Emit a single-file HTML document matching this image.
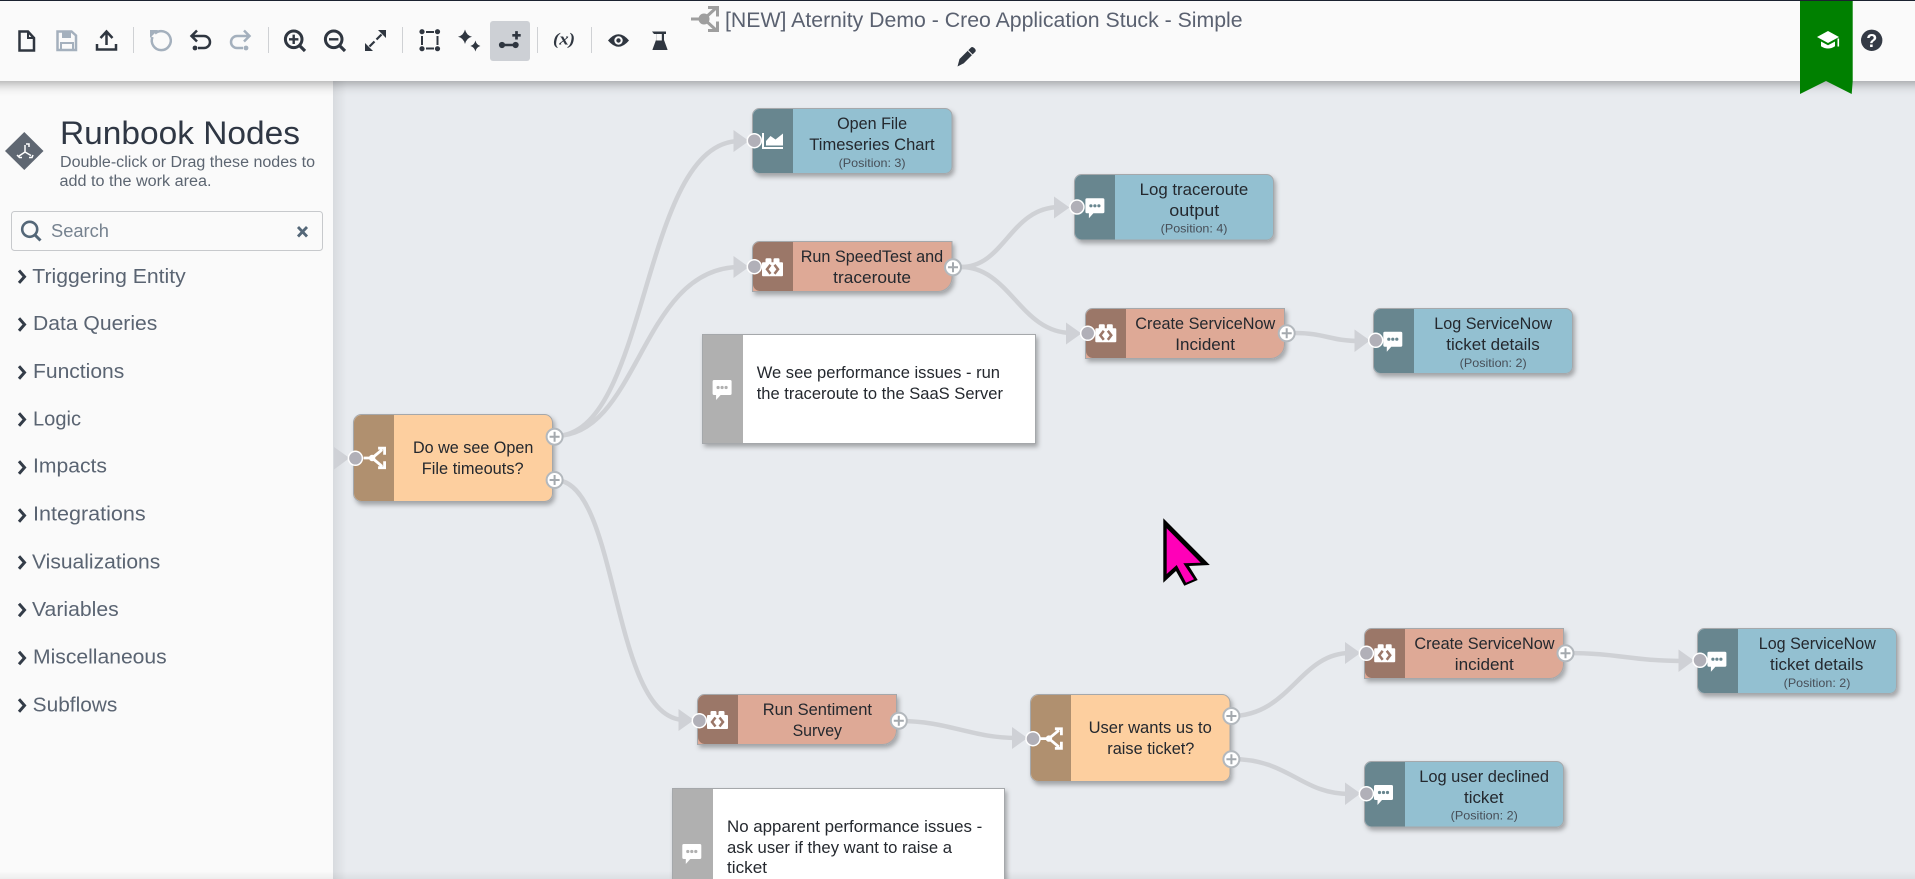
<!DOCTYPE html>
<html lang="en">
<head>
<meta charset="utf-8">
<title>Runbook Editor</title>
<style>
html,body{margin:0;padding:0;width:1915px;height:879px;overflow:hidden;background:#e8ebef}
svg{display:block}
text{font-family:"Liberation Sans",sans-serif}
.n{font-size:16.5px;fill:#24282e}
.p{font-size:12px;fill:#474e57}
.m{font-size:20px;fill:#5a6472}
.e{fill:none;stroke:#cfd1d5;stroke-width:4.5}
.a{fill:#cfd1d6}
.i{fill:#b1b0b8;stroke:#fff;stroke-width:1.5}
.o{fill:#fff;stroke:#b3b8bd;stroke-width:2}
.ph{stroke:#a4a9ae;stroke-width:2;fill:none}
.d{fill:none;stroke:#2f3640;stroke-width:2.5}
.l{fill:none;stroke:#a4b0bd;stroke-width:2.5}
.s{stroke:#cfd1d4;stroke-width:1}
.c{fill:none;stroke:#333c48;stroke-width:3}
</style>
</head>
<body>
<svg xmlns="http://www.w3.org/2000/svg" width="1915" height="879" viewBox="0 0 1915 879">
<defs>
<filter id="sh" x="-15%" y="-25%" width="130%" height="160%"><feDropShadow dx="2" dy="3" stdDeviation="2.500" flood-color="#000" flood-opacity=".3"/></filter>
<filter id="ts" x="-2%" y="-30%" width="104%" height="170%"><feDropShadow dx="0" dy="2" stdDeviation="6" flood-color="#000" flood-opacity=".38"/></filter>
<linearGradient id="sg" x1="0" x2="1" y1="0" y2="0"><stop offset="0" stop-color="#000" stop-opacity=".07"/><stop offset="1" stop-color="#000" stop-opacity="0"/></linearGradient>
<linearGradient id="bg" x1="0" x2="0" y1="0" y2="1"><stop offset="0" stop-color="#000" stop-opacity="0"/><stop offset="1" stop-color="#000" stop-opacity=".05"/></linearGradient>
<g id="bubble"><path d="M1.500 0h16a1.500 1.500 0 0 1 1.500 1.500v12a1.500 1.500 0 0 1-1.500 1.500H8L3.500 20V15h-2A1.500 1.500 0 0 1 0 13.500v-12A1.500 1.500 0 0 1 1.500 0z" fill="#fff"/><circle cx="5.500" cy="7.500" r="1.600" fill="currentColor"/><circle cx="9.500" cy="7.500" r="1.600" fill="currentColor"/><circle cx="13.500" cy="7.500" r="1.600" fill="currentColor"/></g>
<g id="script"><path d="M1 4h2.500V1.200q0-1.200 1.200-1.200h3.600q1.200 0 1.200 1.200V4h2V1.200q0-1.200 1.200-1.200h3.600q1.200 0 1.200 1.200V4H20q1 0 1 1v12q0 1-1 1H1q-1 0-1-1V5q0-1 1-1z" fill="#fff"/><path d="M8.500 6.500 5 11l3.500 4.500M12.500 6.500 16 11l-3.500 4.500" fill="none" stroke="currentColor" stroke-width="2.500"/></g>
<g id="dec" fill="none" stroke="#fff" stroke-width="2.800"><path d="M0 11.300h9M8.500 11.300 18.500 3M8.500 11.300 18.500 19.600M14.500 1.500h6.500v6.500M14.500 21h6.500v-6.500"/><circle cx="8.500" cy="11.300" r="3.200" fill="#fff" stroke="none"/></g>
<path id="ch" d="M0-6.200 5.500 0 0 6.200" class="c"/>
</defs>

<!-- canvas -->
<rect width="1915" height="879" fill="#e8ebef"/>
<rect x="333" y="0" width="14" height="879" fill="url(#sg)"/>

<!-- sidebar -->
<rect x="0" y="0" width="333" height="879" fill="#fafafa"/>
<rect x="0" y="871" width="1915" height="8" fill="url(#bg)"/>
<polygon points="5,151 24.300,132 43.500,151 24.300,170" fill="#5f6772"/>
<path d="M25 152V145M25 152l-6 4M25 152l6 3.500M26 144h3v3M17 155l2.500 2.500h2.500M33 155l-1 2.500h-3" fill="none" stroke="#fff" stroke-width="1.500"/>
<text x="60" y="144" font-size="32" fill="#2f3744" textLength="240" lengthAdjust="spacingAndGlyphs">Runbook Nodes</text>
<text x="60" y="167" font-size="15.500" fill="#5c6571" textLength="255" lengthAdjust="spacingAndGlyphs">Double-click or Drag these nodes to</text>
<text x="59.500" y="186" font-size="15.500" fill="#5c6571" textLength="152" lengthAdjust="spacingAndGlyphs">add to the work area.</text>
<rect x="11.500" y="211.500" width="311" height="39" rx="3" fill="#fafafa" stroke="#c7c9cc"/>
<circle cx="29.700" cy="229.300" r="7.500" fill="none" stroke="#546778" stroke-width="2.600"/>
<path d="M35 235l5.500 5.500" stroke="#546778" stroke-width="3" fill="none"/>
<text x="51" y="237" font-size="18" fill="#76828f" textLength="58" lengthAdjust="spacingAndGlyphs">Search</text>
<path d="M298 227l9 9.500M307 227l-9 9.500" stroke="#546778" stroke-width="2.800" fill="none"/>

<use href="#ch" x="19" y="276.700"/><text class="m" x="32.300" y="283" textLength="153.400" lengthAdjust="spacingAndGlyphs">Triggering Entity</text>
<use href="#ch" x="19" y="324.500"/><text class="m" x="33" y="330" textLength="124.300" lengthAdjust="spacingAndGlyphs">Data Queries</text>
<use href="#ch" x="19" y="372.500"/><text class="m" x="33" y="378" textLength="91.300" lengthAdjust="spacingAndGlyphs">Functions</text>
<use href="#ch" x="19" y="419.500"/><text class="m" x="33" y="425.700" textLength="48" lengthAdjust="spacingAndGlyphs">Logic</text>
<use href="#ch" x="19" y="467.500"/><text class="m" x="33" y="472.700" textLength="74" lengthAdjust="spacingAndGlyphs">Impacts</text>
<use href="#ch" x="19" y="515.500"/><text class="m" x="33" y="520.700" textLength="112.700" lengthAdjust="spacingAndGlyphs">Integrations</text>
<use href="#ch" x="19" y="562.500"/><text class="m" x="32" y="568.500" textLength="128.300" lengthAdjust="spacingAndGlyphs">Visualizations</text>
<use href="#ch" x="19" y="610"/><text class="m" x="32" y="616" textLength="86.700" lengthAdjust="spacingAndGlyphs">Variables</text>
<use href="#ch" x="19" y="658"/><text class="m" x="33" y="663.500" textLength="133.700" lengthAdjust="spacingAndGlyphs">Miscellaneous</text>
<use href="#ch" x="19" y="705.500"/><text class="m" x="32.700" y="711.700" textLength="84.600" lengthAdjust="spacingAndGlyphs">Subflows</text>

<!-- edges -->
<path class="e" d="M555 436C650 436 640 141 740 141"/>
<path class="e" d="M555 436C640 436 640 267 740 267"/>
<path class="e" d="M555 480C620 480 610 720 685 720"/>
<path class="e" d="M961 267C1005 267 1010 207 1060 207"/>
<path class="e" d="M961 267C1010 267 1020 333 1072 333"/>
<path class="e" d="M1295 333C1325 333 1330 341 1360 341"/>
<path class="e" d="M899 721C950 721 970 738 1018 738"/>
<path class="e" d="M1231 716C1290 716 1300 653 1350 653"/>
<path class="e" d="M1231 759C1290 759 1300 794 1350 794"/>
<path class="e" d="M1566 653C1620 653 1630 661 1684 661"/>

<!-- nodes -->
<g stroke="#a5a8ab">
<rect x="752.500" y="108.500" width="199.500" height="65" rx="7" fill="#93c0d1" filter="url(#sh)"/>
<rect x="1074.500" y="174.500" width="199" height="65.500" rx="7" fill="#93c0d1" filter="url(#sh)"/>
<rect x="1373.500" y="308.500" width="199" height="65" rx="7" fill="#93c0d1" filter="url(#sh)"/>
<rect x="1697.500" y="628.500" width="199" height="65" rx="7" fill="#93c0d1" filter="url(#sh)"/>
<rect x="1364.500" y="761.500" width="199" height="65.500" rx="7" fill="#93c0d1" filter="url(#sh)"/>
<path d="M759.500 241.500H952V277.500a14 14 0 0 1-14 14H752.500V248.500a7 7 0 0 1 7-7z" fill="#dea996" filter="url(#sh)"/>
<path d="M1092.500 308.500H1284.500V344.500a14 14 0 0 1-14 14H1085.500V315.500a7 7 0 0 1 7-7z" fill="#dea996" filter="url(#sh)"/>
<path d="M704.500 694.500H896.500V730.500a14 14 0 0 1-14 14H697.500V701.500a7 7 0 0 1 7-7z" fill="#dea996" filter="url(#sh)"/>
<path d="M1371.500 628.500H1563.500V664.500a14 14 0 0 1-14 14H1364.500V635.500a7 7 0 0 1 7-7z" fill="#dea996" filter="url(#sh)"/>
<rect x="353.500" y="414.500" width="199" height="87" rx="8" fill="#fdcf9f" filter="url(#sh)"/>
<rect x="1030.500" y="694.500" width="199.500" height="87" rx="8" fill="#fdcf9f" filter="url(#sh)"/>
<rect x="702.500" y="334.500" width="333" height="109" fill="#fff" filter="url(#sh)"/>
<rect x="672.500" y="788.500" width="332" height="110" fill="#fff" filter="url(#sh)"/>
</g>

<!-- strips -->
<g fill="#68868f">
<path d="M793 109H759.500a7 7 0 0 0-6.500 7V166a7 7 0 0 0 6.500 7H793z"/>
<path d="M1115 175H1081.500a7 7 0 0 0-6.500 7V232.500a7 7 0 0 0 6.500 7H1115z"/>
<path d="M1414 309H1380.500a7 7 0 0 0-6.500 7V366a7 7 0 0 0 6.500 7H1414z"/>
<path d="M1738 629H1704.500a7 7 0 0 0-6.500 7V686a7 7 0 0 0 6.500 7H1738z"/>
<path d="M1405 762H1371.500a7 7 0 0 0-6.500 7V819.500a7 7 0 0 0 6.500 7H1405z"/>
</g>
<g fill="#9b7768">
<path d="M793 242H759.500a7 7 0 0 0-6.500 7V284a7 7 0 0 0 6.500 7H793z"/>
<path d="M1126 309H1092.500a7 7 0 0 0-6.500 7V351a7 7 0 0 0 6.500 7H1126z"/>
<path d="M738 695H704.500a7 7 0 0 0-6.500 7V737a7 7 0 0 0 6.500 7H738z"/>
<path d="M1405 629H1371.500a7 7 0 0 0-6.500 7V671a7 7 0 0 0 6.500 7H1405z"/>
</g>
<g fill="#b0906f">
<path d="M394 415H361.500a8 8 0 0 0-7.500 8V493a8 8 0 0 0 7.500 8H394z"/>
<path d="M1071 695H1038.500a8 8 0 0 0-7.500 8V773a8 8 0 0 0 7.500 8H1071z"/>
</g>
<rect x="703" y="335" width="40" height="108" fill="#b0b0b0"/>
<rect x="673" y="789" width="40" height="90" fill="#b0b0b0"/>

<!-- node icons -->
<path d="M762 133h2v14h19v2h-21zM766 145.500v-4.500l4.500-5 5 3.500 7.500-6v12z" fill="#fff"/>
<use href="#bubble" x="1085.400" y="198.300" color="#68868f"/>
<use href="#bubble" x="1383.300" y="331.700" color="#68868f"/>
<use href="#bubble" x="1707.400" y="651.700" color="#68868f"/>
<use href="#bubble" x="1374" y="785" color="#68868f"/>
<use href="#bubble" x="712.600" y="380" color="#b0b0b0"/>
<use href="#bubble" x="682.300" y="844" color="#b0b0b0"/>
<use href="#script" x="762" y="258.300" color="#9b7768"/>
<use href="#script" x="1095.300" y="324.300" color="#9b7768"/>
<use href="#script" x="707" y="711" color="#9b7768"/>
<use href="#script" x="1374.200" y="644.300" color="#9b7768"/>
<use href="#dec" x="363.600" y="446.700"/>
<use href="#dec" x="1040.400" y="727.300"/>

<!-- arrows -->
<g class="a">
<polygon points="733.500,130 749,141 733.500,152"/>
<polygon points="733.500,256 749,267 733.500,278"/>
<polygon points="1054,196.500 1069.500,207.500 1054,218.500"/>
<polygon points="1066,322.500 1081.500,333.500 1066,344.500"/>
<polygon points="1354.500,329.500 1370,340.500 1354.500,352"/>
<polygon points="334,447 349.500,458 334,469.500"/>
<polygon points="678.500,709 694,720 678.500,731"/>
<polygon points="1012,727 1027.500,738 1012,749"/>
<polygon points="1345,642 1360.500,653 1345,664"/>
<polygon points="1345,782.500 1360.500,793.500 1345,805"/>
<polygon points="1678.500,649.500 1694,660.500 1678.500,672"/>
</g>

<!-- input ports -->
<circle class="i" cx="754.300" cy="140.700" r="7"/>
<circle class="i" cx="754.300" cy="266.700" r="7"/>
<circle class="i" cx="1077" cy="207" r="7"/>
<circle class="i" cx="1087.700" cy="333.300" r="7"/>
<circle class="i" cx="1375.700" cy="340.300" r="7"/>
<circle class="i" cx="355.400" cy="458.300" r="7"/>
<circle class="i" cx="699.300" cy="720.700" r="7"/>
<circle class="i" cx="1033" cy="738.700" r="7"/>
<circle class="i" cx="1366.400" cy="653.300" r="7"/>
<circle class="i" cx="1366.400" cy="793.700" r="7"/>
<circle class="i" cx="1700" cy="660.300" r="7"/>

<!-- output ports -->
<circle class="o" cx="953" cy="267.300" r="8"/><path class="ph" d="M948 267.300h10M953 262.300v10"/>
<circle class="o" cx="1286.700" cy="333.300" r="8"/><path class="ph" d="M1281.700 333.300h10M1286.700 328.300v10"/>
<circle class="o" cx="554.600" cy="436.700" r="8"/><path class="ph" d="M549.600 436.700h10M554.600 431.700v10"/>
<circle class="o" cx="554.600" cy="480" r="8"/><path class="ph" d="M549.600 480h10M554.600 475v10"/>
<circle class="o" cx="898.800" cy="720.700" r="8"/><path class="ph" d="M893.800 720.700h10M898.800 715.700v10"/>
<circle class="o" cx="1231.400" cy="716" r="8"/><path class="ph" d="M1226.400 716h10M1231.400 711v10"/>
<circle class="o" cx="1231.400" cy="759.300" r="8"/><path class="ph" d="M1226.400 759.300h10M1231.400 754.300v10"/>
<circle class="o" cx="1565.500" cy="653.300" r="8"/><path class="ph" d="M1560.500 653.300h10M1565.500 648.300v10"/>

<!-- node text -->
<text class="n" x="837.100" y="129" textLength="70" lengthAdjust="spacingAndGlyphs">Open File</text>
<text class="n" x="809.300" y="150" textLength="125.300" lengthAdjust="spacingAndGlyphs">Timeseries Chart</text>
<text class="p" x="838.600" y="167" textLength="67" lengthAdjust="spacingAndGlyphs">(Position: 3)</text>
<text class="n" x="800.700" y="262" textLength="142.500" lengthAdjust="spacingAndGlyphs">Run SpeedTest and</text>
<text class="n" x="833.200" y="283" textLength="77.800" lengthAdjust="spacingAndGlyphs">traceroute</text>
<text class="n" x="1139.600" y="195" textLength="108.600" lengthAdjust="spacingAndGlyphs">Log traceroute</text>
<text class="n" x="1169.300" y="216" textLength="50" lengthAdjust="spacingAndGlyphs">output</text>
<text class="p" x="1160.700" y="232.700" textLength="66.800" lengthAdjust="spacingAndGlyphs">(Position: 4)</text>
<text class="n" x="1135.300" y="329" textLength="140" lengthAdjust="spacingAndGlyphs">Create ServiceNow</text>
<text class="n" x="1175.300" y="350" textLength="59.700" lengthAdjust="spacingAndGlyphs">Incident</text>
<text class="n" x="1434.300" y="329" textLength="117.700" lengthAdjust="spacingAndGlyphs">Log ServiceNow</text>
<text class="n" x="1446.300" y="350" textLength="93.400" lengthAdjust="spacingAndGlyphs">ticket details</text>
<text class="p" x="1459.700" y="367" textLength="67" lengthAdjust="spacingAndGlyphs">(Position: 2)</text>
<text class="n" x="413" y="453" textLength="120.300" lengthAdjust="spacingAndGlyphs">Do we see Open</text>
<text class="n" x="421.800" y="474" textLength="101.800" lengthAdjust="spacingAndGlyphs">File timeouts?</text>
<text class="n" x="756.700" y="378" textLength="243.300" lengthAdjust="spacingAndGlyphs">We see performance issues - run</text>
<text class="n" x="756.700" y="399" textLength="246.300" lengthAdjust="spacingAndGlyphs">the traceroute to the SaaS Server</text>
<text class="n" x="762.700" y="715" textLength="109.300" lengthAdjust="spacingAndGlyphs">Run Sentiment</text>
<text class="n" x="792.600" y="736" textLength="49.400" lengthAdjust="spacingAndGlyphs">Survey</text>
<text class="n" x="1088.600" y="733" textLength="123.200" lengthAdjust="spacingAndGlyphs">User wants us to</text>
<text class="n" x="1107.300" y="754" textLength="87.100" lengthAdjust="spacingAndGlyphs">raise ticket?</text>
<text class="n" x="727" y="832" textLength="255.300" lengthAdjust="spacingAndGlyphs">No apparent performance issues -</text>
<text class="n" x="727" y="853" textLength="225" lengthAdjust="spacingAndGlyphs">ask user if they want to raise a</text>
<text class="n" x="727" y="873" textLength="40" lengthAdjust="spacingAndGlyphs">ticket</text>
<text class="n" x="1414.400" y="649" textLength="140.100" lengthAdjust="spacingAndGlyphs">Create ServiceNow</text>
<text class="n" x="1454.800" y="670" textLength="59" lengthAdjust="spacingAndGlyphs">incident</text>
<text class="n" x="1758.800" y="649" textLength="117" lengthAdjust="spacingAndGlyphs">Log ServiceNow</text>
<text class="n" x="1770" y="670" textLength="93.300" lengthAdjust="spacingAndGlyphs">ticket details</text>
<text class="p" x="1783.700" y="687" textLength="66.700" lengthAdjust="spacingAndGlyphs">(Position: 2)</text>
<text class="n" x="1419.200" y="782" textLength="129.800" lengthAdjust="spacingAndGlyphs">Log user declined</text>
<text class="n" x="1464" y="803" textLength="39.500" lengthAdjust="spacingAndGlyphs">ticket</text>
<text class="p" x="1450.700" y="819.700" textLength="67.100" lengthAdjust="spacingAndGlyphs">(Position: 2)</text>

<!-- cursor -->
<polygon points="1163.300,518.300 1209.800,565 1189,566 1197.700,580 1184.300,585.700 1176,571 1163.300,582.700" fill="#000"/>
<polygon points="1166.700,528.300 1200.700,562.700 1183.300,563.300 1194,579.300 1186,582.700 1176.700,565 1166.700,574" fill="#ff00b8"/>

<!-- toolbar -->
<rect x="-30" y="0" width="1975" height="81" fill="#fafafa" filter="url(#ts)"/>
<rect x="0" y="0" width="1915" height="1" fill="#1b2230"/>
<g class="s"><path d="M133.500 27v26M268.500 27v26M402.500 27v26M537.500 27v26M591.500 27v26"/></g>

<path class="d" d="M19.500 31.500h8.500l6 6.500v12.500h-14.500z"/><path d="M27 31h2v6h6v2h-8z" fill="#2f3640"/>
<path class="l" d="M57.500 31.500h14l4.500 4v14.500h-18.500z"/><rect x="62" y="31" width="9" height="7" fill="#a4b0bd"/><rect x="61" y="43" width="12" height="7" fill="none" stroke="#a4b0bd" stroke-width="2"/>
<path class="d" d="M106.500 45V33M100.500 38l6-6.500 6 6.500M97 44v5.500h19V44"/>

<path class="l" d="M155 33.500A9.500 9.500 0 1 1 152.500 37"/><polygon points="150,30 158,30 150,38" fill="#a4b0bd"/>
<path class="d" d="M192 36h12a6 6 0 0 1 0 12h-6M197 30.500l-5.500 5.500 5.500 5.500"/><circle cx="195" cy="48" r="2.400" fill="#2f3640"/>
<path class="l" d="M249 36h-12a6 6 0 0 0 0 12h6M244 30.500l5.500 5.500-5.500 5.500"/><circle cx="246" cy="48" r="2.400" fill="#a4b0bd"/>

<circle cx="293.700" cy="39.300" r="8.300" fill="none" stroke="#2f3640" stroke-width="3"/><path d="M300 46l5 5" stroke="#2f3640" stroke-width="3.200"/><path d="M289 39.300h9.400M293.700 34.600v9.400" stroke="#2f3640" stroke-width="2.400"/>
<circle cx="333.700" cy="39.300" r="8.300" fill="none" stroke="#2f3640" stroke-width="3"/><path d="M340 46l5 5" stroke="#2f3640" stroke-width="3.200"/><path d="M329 39.300h9.400" stroke="#2f3640" stroke-width="2.400"/>
<path d="M378 30h8v8zM365 43l8 8h-8z" fill="#2f3640"/><path d="M381.500 34.500l-5 5M369.500 46.500l5-5" fill="none" stroke="#2f3640" stroke-width="2.200"/>

<g fill="#2f3640"><circle cx="422" cy="31.700" r="2.600"/><circle cx="437.500" cy="31.700" r="2.600"/><circle cx="422" cy="48.700" r="2.600"/><circle cx="437.500" cy="48.700" r="2.600"/></g>
<path d="M426 32h8M426 48.500h8M422 36v9M437.500 36v9" fill="none" stroke="#2f3640" stroke-width="2"/>
<path d="M465 29.500q1.500 6 7 7.200q-5.500 1.200-7 7.300q-1.500-6.100-7-7.300q5.500-1.200 7-7.200zM475.400 40.500q1 4.300 5 5.500q-4 1.200-5 5.500q-1-4.300-5-5.500q4-1.200 5-5.500z" fill="#2f3640"/>

<rect x="490" y="21" width="40" height="40" rx="3" fill="#cdd0d5"/>
<circle cx="502" cy="45" r="3.100" fill="#2f3640"/><circle cx="515.600" cy="45" r="3.100" fill="#2f3640"/><path d="M502 45h13.600" stroke="#2f3640" stroke-width="2.500"/><path d="M512.300 35.300h8.400M516.500 31.100v8.400" stroke="#2f3640" stroke-width="2.700"/>

<text x="553" y="44.500" font-size="17" font-style="italic" font-weight="bold" fill="#2f3640" style="font-family:'Liberation Serif',serif" textLength="22" lengthAdjust="spacingAndGlyphs">(x)</text>

<path d="M608 40.500Q618.500 28 629 40.500Q618.500 53 608 40.500z" fill="#2f3640"/><circle cx="618.500" cy="40.500" r="4.200" fill="#fafafa"/><circle cx="618.500" cy="40.500" r="2.200" fill="#2f3640"/>
<path d="M652 31.500h14v2.500h-2v6l3.500 9.500v.5h-15v-.5l3.500-9.500v-6h-2z" fill="#2f3640"/><rect x="656.200" y="34" width="5.600" height="6.500" fill="#fafafa"/>

<!-- title -->
<g fill="none" stroke="#9e9e9e" stroke-width="3"><path d="M691 19h12M704 19l12-11M704 19l12 11M708 7.500h9.500v9M708 30.500h9.500v-9"/></g><circle cx="704" cy="19" r="5.500" fill="#9e9e9e"/>
<text x="725" y="27" font-size="21" fill="#5a6170" textLength="517.600" lengthAdjust="spacingAndGlyphs">[NEW] Aternity Demo - Creo Application Stuck - Simple</text>
<path d="M957.500 66.500l2-7.500 11.500-11.500q1.500-1.200 3.500.8t.8 3.500l-11.500 11.500z" fill="#2f3640"/>
<path d="M968 50.500l4.500 4.500" stroke="#fafafa" stroke-width="1" fill="none"/>

<!-- ribbon -->
<polygon points="1800,1 1852.700,1 1852.700,81 1851.700,94 1826,81 1800,94" fill="#008000"/>
<path d="M1828 31l11 6-11 6-11-6zM1821 41.500l7 3.800 7-3.800v4.700q-7 4.500-14 0zM1837.500 38.500h1.600v8h-1.600z" fill="#fff"/>

<!-- help -->
<circle cx="1871.700" cy="40.300" r="10.700" fill="#343a45"/>
<text x="1871.700" y="46.800" font-size="18" font-weight="bold" fill="#fff" text-anchor="middle">?</text>
</svg>
</body>
</html>
